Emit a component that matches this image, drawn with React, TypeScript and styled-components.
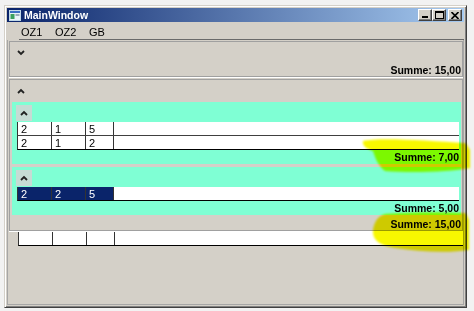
import styled, { createGlobalStyle } from 'styled-components';

const GlobalStyle = createGlobalStyle`
  html, body {
    margin: 0;
    padding: 0;
    background: #f2f2f2;
  }
  body {
    font-family: "Liberation Sans", Arial, sans-serif;
  }
`;

const Page = styled.div`
  position: relative;
  width: 474px;
  height: 311px;
  padding: 5px 0 0 4px;
  box-sizing: border-box;
  overflow: hidden;
`;

const Window = styled.div`
  width: 463px;
  height: 303px;
  box-sizing: border-box;
  background: #d4d0c8;
  border: 1px solid;
  border-color: #d4d0c8 #404040 #404040 #d4d0c8;
  box-shadow: inset 1px 1px #fff, inset -1px -1px #808080;
  padding: 2px;
  display: flex;
  flex-direction: column;
`;

const TitleBar = styled.div`
  height: 14px;
  display: flex;
  align-items: center;
  padding: 0 2px;
  background: linear-gradient(to right, #0a246a, #a6caf0);
`;

const TitleText = styled.span`
  flex: 1;
  margin-left: 3px;
  color: #fff;
  font-weight: bold;
  font-size: 10.5px;
  line-height: 14px;
`;

const CaptionButton = styled.div<{ $gap?: boolean }>`
  width: 14px;
  height: 12px;
  box-sizing: border-box;
  margin-left: ${p => (p.$gap ? '2px' : '0')};
  background: #d4d0c8;
  border: 1px solid;
  border-color: #fff #404040 #404040 #fff;
  box-shadow: inset -1px -1px #808080;
  display: flex;
  align-items: center;
  justify-content: center;
`;

const MenuBar = styled.div`
  height: 18px;
  box-sizing: border-box;
  padding-left: 12px;
  display: flex;
`;

const MenuList = styled.div`
  flex: 1;
  height: 17px;
  padding-left: 2px;
  border-bottom: 1px solid #6a6a6a;
  display: flex;
  align-items: flex-end;
`;

const MenuItem = styled.span`
  width: 34px;
  font-size: 11px;
  line-height: 13px;
  color: #000;
`;

const Client = styled.div`
  flex: 1;
  border: 1px solid #a6a6a6;
  border-top: none;
  padding: 1px 0 0 1px;
  display: flex;
  flex-direction: column;
`;

const Expander = styled.div<{ $space: number }>`
  border: 1px solid #a0a0a0;
  box-shadow: 0 1px 0 #fff;
  margin-bottom: ${p => p.$space}px;
  padding: 0 1px 0 2px;
`;

const ExpanderHeader = styled.div`
  padding: 3px 0 3px 1px;
  display: flex;
`;

const Toggle = styled.div<{ $tint?: string }>`
  width: 16px;
  height: 16px;
  background: ${p => p.$tint || 'transparent'};
  display: flex;
  align-items: center;
  justify-content: center;
`;

const SumText = styled.div<{ $lh: number; $mt: number }>`
  text-align: right;
  font-weight: bold;
  font-size: 10.5px;
  line-height: ${p => p.$lh}px;
  margin-top: ${p => p.$mt}px;
  color: #000;
`;

const PanelStack = styled.div`
  display: flex;
  flex-direction: column;
  gap: 3px;
`;

const Panel = styled.div`
  background: #7fffd4;
  padding: 3px 2px 0 4px;
`;

const PanelToggleWrap = styled.div`
  margin-bottom: 1px;
`;

const Rows = styled.div<{ $indent: number }>`
  margin-left: ${p => p.$indent}px;
`;

const Row = styled.div<{ $last?: boolean }>`
  display: grid;
  grid-template-columns: 34px 34px 28px 1fr;
  height: 14px;
  box-sizing: border-box;
  border-left: 1px solid #333;
  border-bottom: 1px solid ${p => (p.$last ? '#000' : '#404040')};
  background: #fff;
`;

const Cell = styled.div<{ $selected?: boolean }>`
  box-sizing: border-box;
  padding: 1px 0 0 3px;
  font-size: 11px;
  line-height: 12px;
  color: ${p => (p.$selected ? '#fff' : '#000')};
  background: ${p => (p.$selected ? '#0a246a' : '#fff')};
  border-right: 1px solid #333;
  &:last-child {
    border-right: none;
    background: #fff;
  }
`;

const Marker = styled.svg`
  position: absolute;
  left: 0;
  top: 0;
  pointer-events: none;
  mix-blend-mode: multiply;
`;

const Chevron = ({ up }: { up?: boolean }) => (
  <svg width="8" height="6" viewBox="0 0 8 6">
    <path
      d={up ? 'M1 5 L4 2 L7 5' : 'M1 1 L4 4 L7 1'}
      fill="none"
      stroke="#222"
      strokeWidth="1.8"
    />
  </svg>
);

const AppIcon = () => (
  <svg width="12" height="11" viewBox="0 0 12 11">
    <rect x="0.5" y="0.5" width="11" height="10" fill="#e8f4f8" stroke="#c0d8e8" />
    <rect x="1" y="1" width="10" height="2" fill="#3a6fc4" />
    <rect x="1.5" y="4" width="4" height="5" fill="#3aa060" />
    <rect x="6.5" y="4" width="4" height="2" fill="#9ab" />
  </svg>
);

type Line = { values: string[]; selected?: boolean };

const DataRows = ({ lines, indent }: { lines: Line[]; indent: number }) => (
  <Rows $indent={indent}>
    {lines.map((line, i) => (
      <Row key={i} $last={i === lines.length - 1}>
        {line.values.map((v, j) => (
          <Cell key={j} $selected={line.selected}>
            {v}
          </Cell>
        ))}
        <Cell />
      </Row>
    ))}
  </Rows>
);

const groups = [
  {
    sum: '7,00',
    lines: [{ values: ['2', '1', '5'] }, { values: ['2', '1', '2'] }],
  },
  {
    sum: '5,00',
    lines: [{ values: ['2', '2', '5'], selected: true }],
  },
];

export default function App() {
  return (
    <>
      <GlobalStyle />
      <Page>
        <Window>
          <TitleBar>
            <AppIcon />
            <TitleText>MainWindow</TitleText>
            <CaptionButton>
              <svg width="8" height="8" viewBox="0 0 8 8">
                <rect x="1" y="5" width="6" height="2" fill="#000" />
              </svg>
            </CaptionButton>
            <CaptionButton>
              <svg width="9" height="8" viewBox="0 0 9 8">
                <rect x="0.5" y="0.5" width="8" height="7" fill="none" stroke="#000" />
                <rect x="0" y="0" width="9" height="2" fill="#000" />
              </svg>
            </CaptionButton>
            <CaptionButton $gap>
              <svg width="8" height="7" viewBox="0 0 8 7">
                <path d="M0.5 0 L7.5 7 M7.5 0 L0.5 7" stroke="#000" strokeWidth="1.6" />
              </svg>
            </CaptionButton>
          </TitleBar>
          <MenuBar>
            <MenuList>
              <MenuItem>OZ1</MenuItem>
              <MenuItem>OZ2</MenuItem>
              <MenuItem>GB</MenuItem>
            </MenuList>
          </MenuBar>
          <Client>
            <Expander $space={2}>
              <ExpanderHeader>
                <Toggle>
                  <Chevron />
                </Toggle>
              </ExpanderHeader>
              <SumText $lh={12} $mt={0}>Summe: 15,00</SumText>
            </Expander>
            <Expander $space={1}>
              <ExpanderHeader>
                <Toggle>
                  <Chevron up />
                </Toggle>
              </ExpanderHeader>
              <PanelStack>
                {groups.map((g, i) => (
                  <Panel key={i}>
                    <PanelToggleWrap>
                      <Toggle $tint="#c6dbd4">
                        <Chevron up />
                      </Toggle>
                    </PanelToggleWrap>
                    <DataRows lines={g.lines} indent={1} />
                    <SumText $lh={13} $mt={1}>Summe: {g.sum}</SumText>
                  </Panel>
                ))}
              </PanelStack>
              <SumText $lh={12} $mt={3}>Summe: 15,00</SumText>
            </Expander>
            <DataRows lines={[{ values: ['', '', ''] }]} indent={9} />
          </Client>
        </Window>
        <Marker width="474" height="311" viewBox="0 0 474 311">
          <defs>
            <filter id="soft" x="-5%" y="-20%" width="110%" height="140%">
              <feGaussianBlur stdDeviation="0.8" />
            </filter>
          </defs>
          <g fill="#f8f800" filter="url(#soft)">
            <path d="M363 141 C380 137 430 141 466 143 L470 150 L470 168 C450 172 410 173 385 171 C378 166 375 157 373 151 C367 149 362 146 363 141 Z" />
            <path d="M385 214 C410 212 440 212 466 213 L469 220 L469 250 C450 253 420 252 395 248 C380 246 372 240 373 230 C374 222 378 216 385 214 Z" />
          </g>
        </Marker>
      </Page>
    </>
  );
}
